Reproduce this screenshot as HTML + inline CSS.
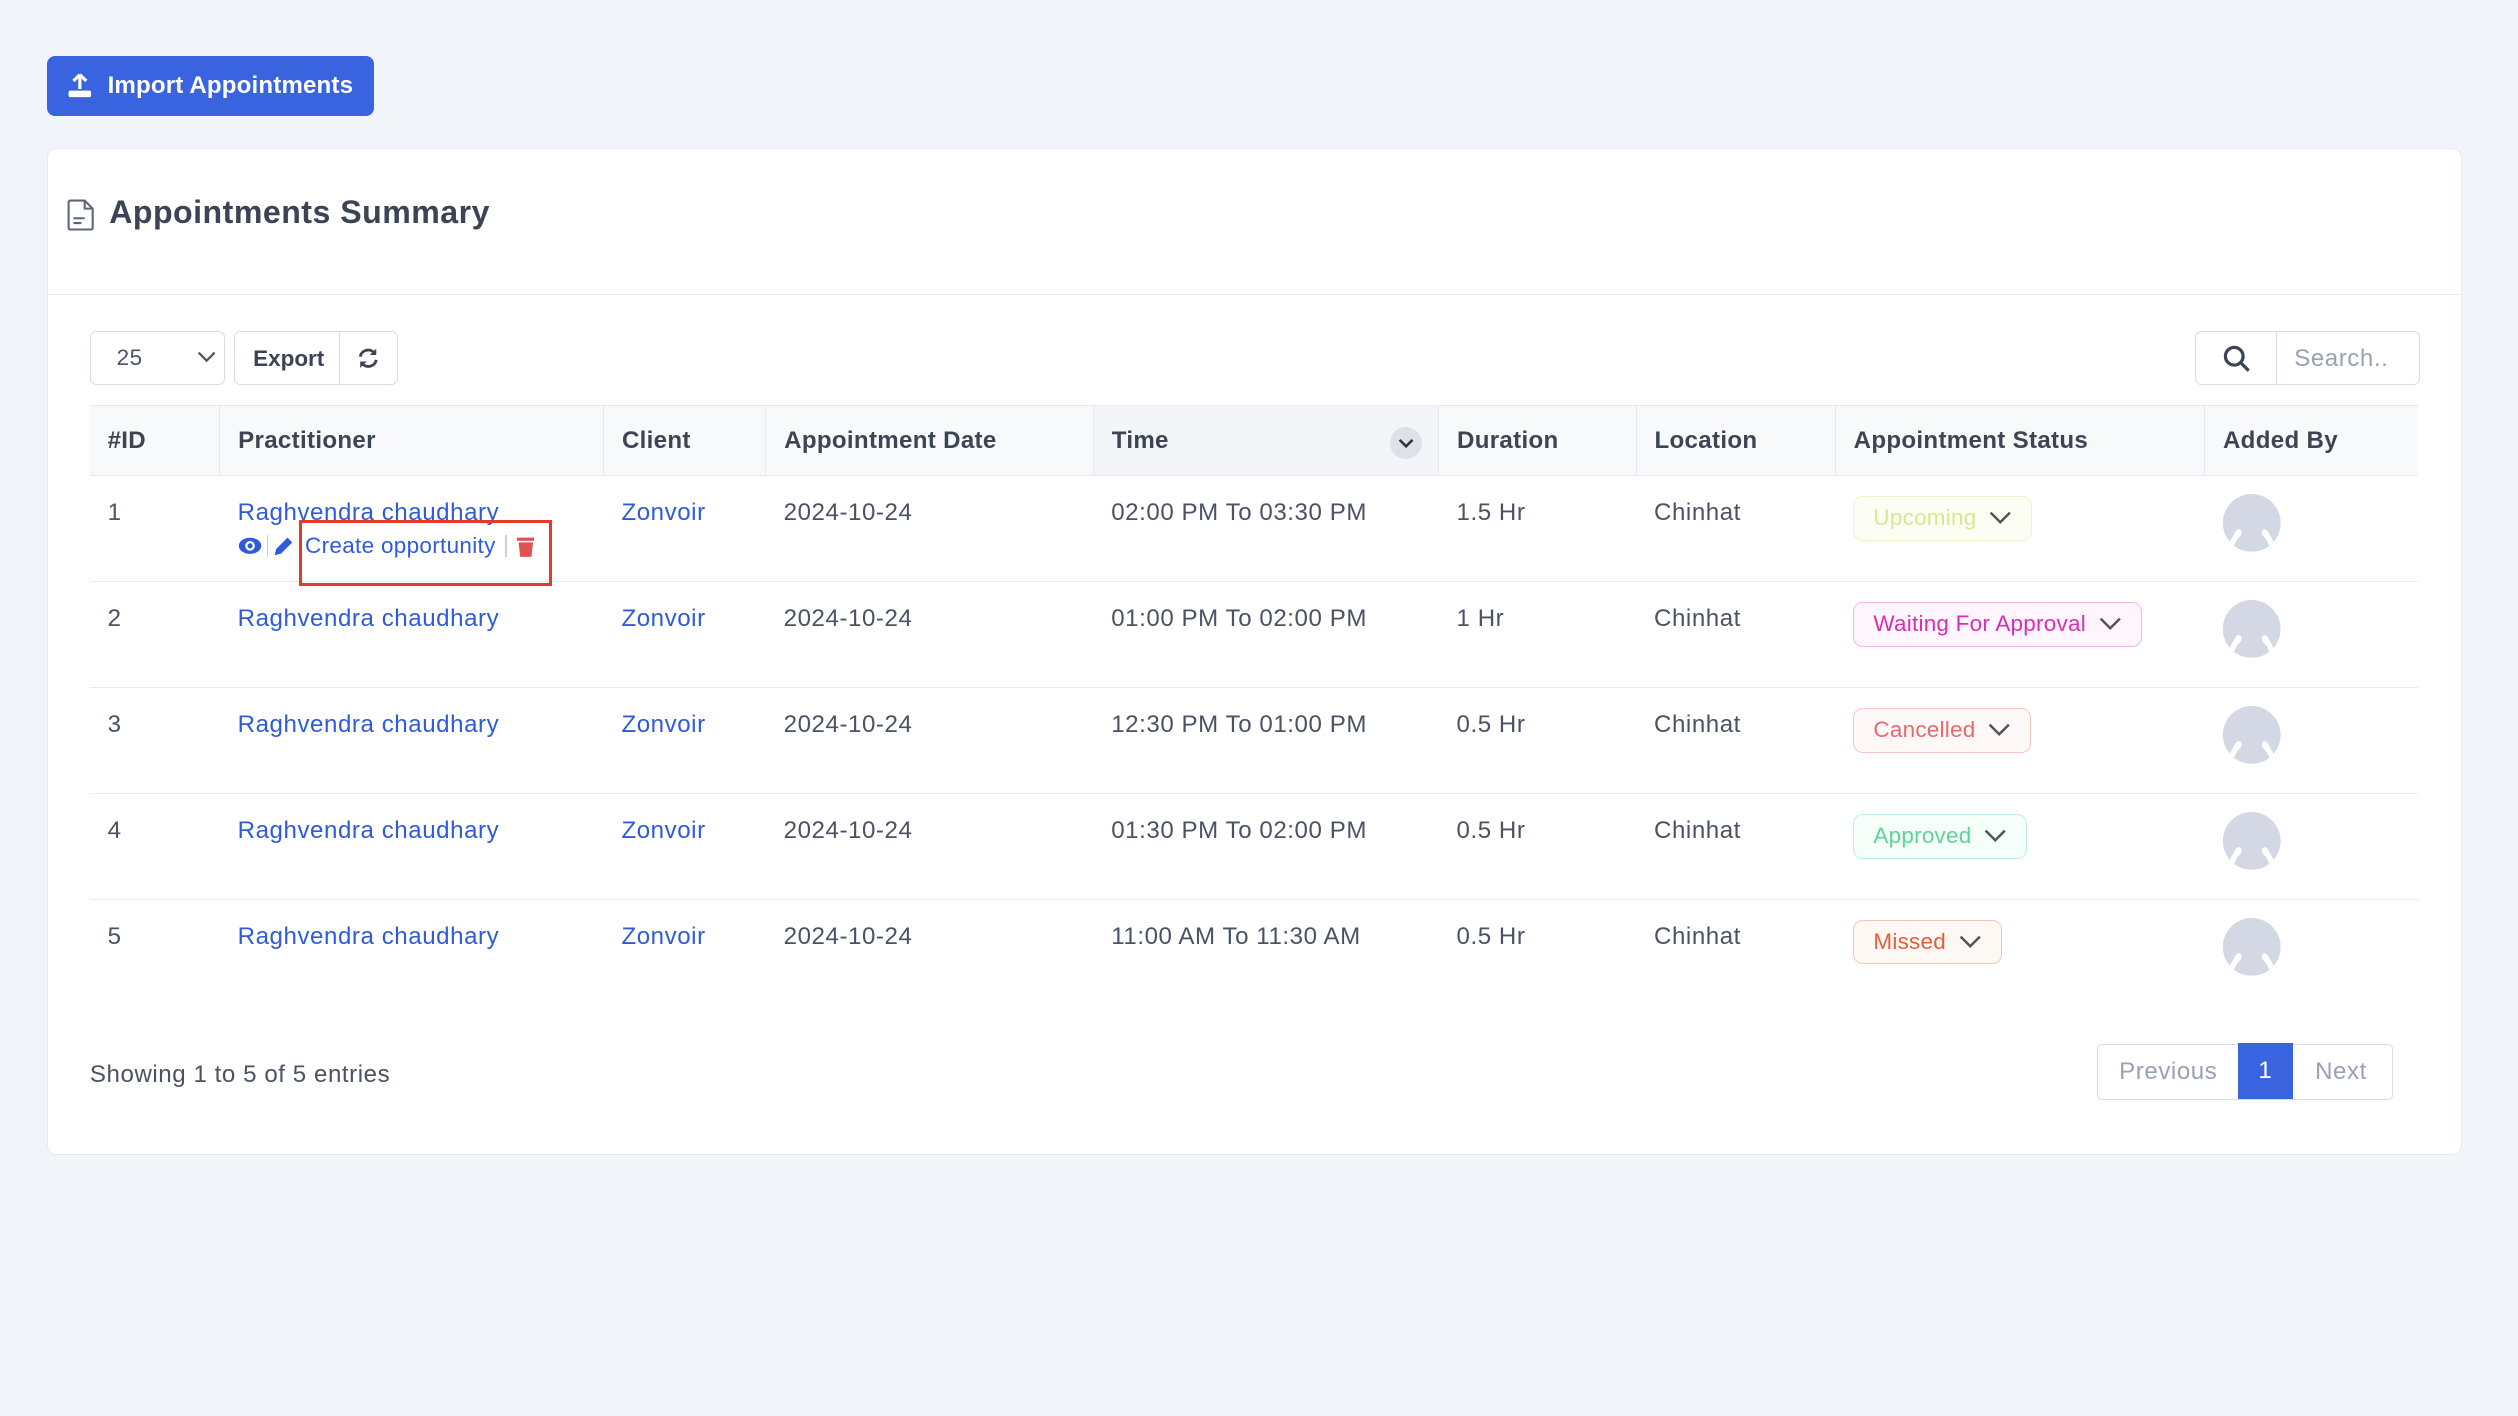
<!DOCTYPE html>
<html><head><meta charset="utf-8"><style>
html,body{margin:0;padding:0}
body{width:1568px;height:882px;zoom:1.6059;background:#f1f4f9;font-family:"Liberation Sans",sans-serif;color:#4a5263;position:relative;overflow:hidden;letter-spacing:0.35px}
.abs{position:absolute}
.btn{left:29px;top:35px;width:204px;height:37px;background:#3a63e0;border-radius:5px;color:#fff;font-size:15px;font-weight:bold;display:flex;align-items:center;box-sizing:border-box;padding-left:13px;letter-spacing:0.1px}
.card{left:29px;top:92px;width:1504px;height:627px;background:#fff;border:1px solid #e6e9ef;border-radius:6px;box-sizing:border-box}
.title{left:68px;top:121px;font-size:20px;font-weight:bold;color:#3b4354;letter-spacing:0.3px}
.hr{left:30px;top:183px;width:1502px;height:1px;background:#e6e9ef}
.box{border:1px solid #d7dce4;box-sizing:border-box;border-radius:4px;background:#fff}
table{position:absolute;left:56px;top:252px;border-collapse:collapse;font-size:15px}
th{background:#f8f9fb;text-align:left;font-weight:bold;color:#3d4555;height:44px;padding:0 11px;border-left:1px solid #e6e9ef;border-top:1px solid #e6e9ef;border-bottom:1px solid #e6e9ef;box-sizing:border-box;letter-spacing:0.2px}
th:first-child{border-left:none}
td{height:66px;vertical-align:top;padding:14px 11px 0;box-sizing:border-box;border-bottom:1px solid #e9ecf1;color:#4a5263}
tr:last-child td{border-bottom:none}
a{color:#2f5bdb;text-decoration:none}
.badge{display:inline-flex;align-items:center;height:28px;border-radius:6px;padding:0 12px;font-size:14px;border:1px solid;margin-top:-2px;box-sizing:border-box;letter-spacing:0.15px}
.badge svg{margin-left:8px}
.av{margin-top:-3px}
</style></head><body>
<svg width="0" height="0" style="position:absolute"><defs><clipPath id="c"><circle cx="18.5" cy="18" r="18"/></clipPath><g id="p"><g clip-path="url(#c)"><rect width="37" height="36" fill="#d3d8e4"/><path d="M5 37c2-3 3-6 4-8 1-2 4-3 3-6-1-2-3-1-4 1-2 4-5 8-5 13z" fill="#fff"/><path d="M32 37c-2-3-3-6-4-8-1-2-4-3-3-6 1-2 3-1 4 1 2 4 5 8 5 13z" fill="#fff"/></g></g></defs></svg>
<div class="abs btn"><svg width="16" height="16" viewBox="0 0 16 16" style="margin-right:9px"><path d="M8 1L4 5M8 1l4 4M8 1v9" stroke="#fff" stroke-width="2" fill="none"/><rect x="1" y="11" width="14" height="4" rx="1" fill="#fff"/></svg>Import Appointments</div>
<div class="abs card"></div>
<svg class="abs" style="left:42px;top:124px" width="17" height="20" viewBox="0 0 17 20"><path d="M1 2a1 1 0 0 1 1-1h9l5 5v12a1 1 0 0 1-1 1H2a1 1 0 0 1-1-1z M11 1v5h5 M4 12h7 M4 15h5" stroke="#5d6678" stroke-width="1.3" fill="none"/></svg>
<div class="abs title">Appointments Summary</div>
<div class="abs hr"></div>
<div class="abs box" style="left:56px;top:206px;width:84px;height:34px;font-size:14px;padding:8px 0 0 16px">25<svg style="position:absolute;right:5px;top:12px" width="12" height="8"><path d="M1 1l5 5 5-5" stroke="#555" stroke-width="1.4" fill="none"/></svg></div>
<div class="abs box" style="left:146px;top:206px;width:102px;height:34px;font-size:14px;font-weight:bold;color:#3b4354;padding:9px 0 0 11px;letter-spacing:0">Export</div>
<div class="abs" style="left:211px;top:207px;width:1px;height:32px;background:#d7dce4"></div>
<svg class="abs" style="left:222px;top:216px" width="14" height="14" viewBox="0 0 14 14"><path d="M2 6a5 5 0 0 1 9-2M12 8a5 5 0 0 1-9 2" stroke="#3b4354" stroke-width="1.8" fill="none"/><path d="M12 1v4H8zM2 13V9h4z" fill="#3b4354"/></svg>
<div class="abs box" style="left:1367px;top:206px;width:140px;height:34px;font-size:15px;color:#98a2b3;padding:8px 0 0 61px">Search..</div>
<div class="abs" style="left:1417px;top:207px;width:1px;height:32px;background:#d7dce4"></div>
<svg class="abs" style="left:1384px;top:215px" width="17" height="17"><circle cx="7" cy="7" r="5.5" stroke="#3b4354" stroke-width="2" fill="none"/><path d="M11 11l5 5" stroke="#3b4354" stroke-width="2"/></svg>
<table>
<tr><th style="width:81px">#ID</th><th style="width:239px">Practitioner</th><th style="width:101px">Client</th><th style="width:204px">Appointment Date</th><th style="width:215px;background:#f3f5f8;position:relative">Time<span style="position:absolute;right:10px;top:13px;width:20px;height:20px;border-radius:50%;background:#dde1e8"><svg width="20" height="20"><path d="M6 8l4 4 4-4" stroke="#333" stroke-width="1.6" fill="none"/></svg></span></th><th style="width:123px">Duration</th><th style="width:124px">Location</th><th style="width:230px">Appointment Status</th><th style="width:133px">Added By</th></tr>
<tr><td>1</td><td><a>Raghvendra chaudhary</a><div style="margin-top:4px;font-size:14px;display:flex;align-items:center;letter-spacing:0.2px"><svg width="15" height="11" viewBox="0 0 15 11"><ellipse cx="7.5" cy="5.5" rx="7" ry="5" fill="#2f5bdb"/><circle cx="7.5" cy="5.5" r="3" fill="#fff"/><circle cx="7.5" cy="5.5" r="1.6" fill="#2f5bdb"/></svg><span style="width:1px;height:14px;background:#ccd;margin:0 3px"></span><svg width="13" height="13"><path d="M1 12l1-4 7-7 3 3-7 7z" fill="#2f5bdb"/></svg><span style="width:1px;height:14px;background:#ccd;margin:0 3px"></span><a>Create opportunity</a><span style="width:1px;height:14px;background:#ccd;margin:0 6px"></span><svg width="11" height="13"><rect x="0" y="1" width="11" height="2" fill="#e05252"/><path d="M1 4h9l-1 9H2z" fill="#e05252"/></svg></div></td><td><a>Zonvoir</a></td><td>2024-10-24</td><td>02:00 PM To 03:30 PM</td><td>1.5 Hr</td><td>Chinhat</td><td><span class="badge" style="color:#d4ea8f;border-color:#eaf5c8;background:#fcfef4">Upcoming<svg width="14" height="9"><path d="M1 1l6 6 6-6" stroke="#555" stroke-width="1.6" fill="none"/></svg></span></td><td><svg class="av" width="37" height="36"><use href="#p"/></svg></td></tr>
<tr><td>2</td><td><a>Raghvendra chaudhary</a></td><td><a>Zonvoir</a></td><td>2024-10-24</td><td>01:00 PM To 02:00 PM</td><td>1 Hr</td><td>Chinhat</td><td><span class="badge" style="color:#d62fb4;border-color:#f2b5e4;background:#fef6fc">Waiting For Approval<svg width="14" height="9"><path d="M1 1l6 6 6-6" stroke="#555" stroke-width="1.6" fill="none"/></svg></span></td><td><svg class="av" width="37" height="36"><use href="#p"/></svg></td></tr>
<tr><td>3</td><td><a>Raghvendra chaudhary</a></td><td><a>Zonvoir</a></td><td>2024-10-24</td><td>12:30 PM To 01:00 PM</td><td>0.5 Hr</td><td>Chinhat</td><td><span class="badge" style="color:#e86a6a;border-color:#f6c4c4;background:#fef8f8">Cancelled<svg width="14" height="9"><path d="M1 1l6 6 6-6" stroke="#555" stroke-width="1.6" fill="none"/></svg></span></td><td><svg class="av" width="37" height="36"><use href="#p"/></svg></td></tr>
<tr><td>4</td><td><a>Raghvendra chaudhary</a></td><td><a>Zonvoir</a></td><td>2024-10-24</td><td>01:30 PM To 02:00 PM</td><td>0.5 Hr</td><td>Chinhat</td><td><span class="badge" style="color:#5ed49a;border-color:#bdf0d8;background:#f6fefa">Approved<svg width="14" height="9"><path d="M1 1l6 6 6-6" stroke="#555" stroke-width="1.6" fill="none"/></svg></span></td><td><svg class="av" width="37" height="36"><use href="#p"/></svg></td></tr>
<tr><td>5</td><td><a>Raghvendra chaudhary</a></td><td><a>Zonvoir</a></td><td>2024-10-24</td><td>11:00 AM To 11:30 AM</td><td>0.5 Hr</td><td>Chinhat</td><td><span class="badge" style="color:#e0603e;border-color:#f4c3b4;background:#fef8f5">Missed<svg width="14" height="9"><path d="M1 1l6 6 6-6" stroke="#555" stroke-width="1.6" fill="none"/></svg></span></td><td><svg class="av" width="37" height="36"><use href="#p"/></svg></td></tr>
</table>
<div class="abs" style="left:186px;top:324px;width:158px;height:41px;border:2px solid #e33a2b;box-sizing:border-box"></div>
<div class="abs" style="left:56px;top:661px;font-size:15px">Showing 1 to 5 of 5 entries</div>
<div class="abs box" style="left:1306px;top:650px;width:184px;height:35px;border-radius:3px;font-size:15px;color:#98a2b3">
<span class="abs" style="left:13px;top:8px">Previous</span>
<span class="abs" style="left:87px;top:-1px;width:34px;height:35px;background:#3a63e0;color:#fff;text-align:center;line-height:35px">1</span>
<span class="abs" style="left:135px;top:8px">Next</span></div>
</body></html>
